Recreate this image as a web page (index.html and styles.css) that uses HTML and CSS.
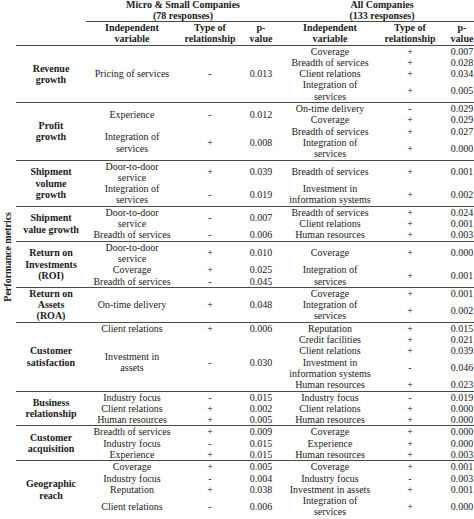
FILE: index.html
```html
<!DOCTYPE html>
<html lang="en">
<head>
<meta charset="utf-8">
<title>Performance metrics</title>
<link rel="stylesheet" href="styles.css">
</head>
<body>
<div class="viewport">
<div class="table">
  <!-- group header -->
  <div class="hd-blank"></div>
  <div class="grp grp-left">Micro &amp; Small Companies<br>(78 responses)</div>
  <div class="grp grp-right">All Companies<br>(133 responses)</div>

  <!-- sub header -->
  <div class="sub sub-blank"></div>
  <div class="sub">Independent<br>variable</div>
  <div class="sub">Type of<br>relationship</div>
  <div class="sub">p-<br>value</div>
  <div class="sub">Independent<br>variable</div>
  <div class="sub">Type of<br>relationship</div>
  <div class="sub">p-<br>value</div>

  <div class="side"><span>Performance metrics</span></div>

  <!-- Revenue growth -->
  <div class="metric">Revenue<br>growth</div>
  <div class="panel left">
    <div class="item"><span>Pricing of services</span><span>-</span><span>0.013</span></div>
  </div>
  <div class="panel right">
    <div class="item"><span>Coverage</span><span>+</span><span>0.007</span></div>
    <div class="item"><span>Breadth of services</span><span>+</span><span>0.028</span></div>
    <div class="item"><span>Client relations</span><span>+</span><span>0.034</span></div>
    <div class="item"><span>Integration of<br>services</span><span>+</span><span>0.005</span></div>
  </div>

  <!-- Profit growth -->
  <div class="metric">Profit<br>growth</div>
  <div class="panel left around">
    <div class="item"><span>Experience</span><span>-</span><span>0.012</span></div>
    <div class="item"><span>Integration of<br>services</span><span>+</span><span>0.008</span></div>
  </div>
  <div class="panel right">
    <div class="item"><span>On-time delivery</span><span>-</span><span>0.029</span></div>
    <div class="item"><span>Coverage</span><span>+</span><span>0.029</span></div>
    <div class="item"><span>Breadth of services</span><span>+</span><span>0.027</span></div>
    <div class="item"><span>Integration of<br>services</span><span>+</span><span>0.000</span></div>
  </div>

  <!-- Shipment volume growth -->
  <div class="metric">Shipment<br>volume<br>growth</div>
  <div class="panel left">
    <div class="item"><span>Door-to-door<br>service</span><span>+</span><span>0.039</span></div>
    <div class="item"><span>Integration of<br>services</span><span>-</span><span>0.019</span></div>
  </div>
  <div class="panel right">
    <div class="item h2"><span>Breadth of services</span><span>+</span><span>0.001</span></div>
    <div class="item h2"><span>Investment in<br>information systems</span><span>+</span><span>0.002</span></div>
  </div>

  <!-- Shipment value growth -->
  <div class="metric">Shipment<br>value growth</div>
  <div class="panel left">
    <div class="item"><span>Door-to-door<br>service</span><span>-</span><span>0.007</span></div>
    <div class="item"><span>Breadth of services</span><span>-</span><span>0.006</span></div>
  </div>
  <div class="panel right">
    <div class="item"><span>Breadth of services</span><span>+</span><span>0.024</span></div>
    <div class="item"><span>Client relations</span><span>+</span><span>0.001</span></div>
    <div class="item"><span>Human resources</span><span>+</span><span>0.003</span></div>
  </div>

  <!-- ROI -->
  <div class="metric">Return on<br>Investments<br>(ROI)</div>
  <div class="panel left">
    <div class="item"><span>Door-to-door<br>service</span><span>+</span><span>0.010</span></div>
    <div class="item"><span>Coverage</span><span>+</span><span>0.025</span></div>
    <div class="item"><span>Breadth of services</span><span>-</span><span>0.045</span></div>
  </div>
  <div class="panel right">
    <div class="item h2"><span>Coverage</span><span>+</span><span>0.000</span></div>
    <div class="item h2"><span>Integration of<br>services</span><span>+</span><span>0.001</span></div>
  </div>

  <!-- ROA -->
  <div class="metric">Return on<br>Assets<br>(ROA)</div>
  <div class="panel left">
    <div class="item"><span>On-time delivery</span><span>+</span><span>0.048</span></div>
  </div>
  <div class="panel right">
    <div class="item"><span>Coverage</span><span>+</span><span>0.001</span></div>
    <div class="item"><span>Integration of<br>services</span><span>+</span><span>0.002</span></div>
  </div>

  <!-- Customer satisfaction -->
  <div class="metric">Customer<br>satisfaction</div>
  <div class="panel left top">
    <div class="item"><span>Client relations</span><span>+</span><span>0.006</span></div>
    <div class="item grow"><span>Investment in<br>assets</span><span>-</span><span>0.030</span></div>
  </div>
  <div class="panel right">
    <div class="item"><span>Reputation</span><span>+</span><span>0.015</span></div>
    <div class="item"><span>Credit facilities</span><span>+</span><span>0.021</span></div>
    <div class="item"><span>Client relations</span><span>+</span><span>0.039</span></div>
    <div class="item"><span>Investment in<br>information systems</span><span>-</span><span>0.046</span></div>
    <div class="item"><span>Human resources</span><span>+</span><span>0.023</span></div>
  </div>

  <!-- Business relationship -->
  <div class="metric">Business<br>relationship</div>
  <div class="panel left">
    <div class="item"><span>Industry focus</span><span>-</span><span>0.015</span></div>
    <div class="item"><span>Client relations</span><span>+</span><span>0.002</span></div>
    <div class="item"><span>Human resources</span><span>+</span><span>0.005</span></div>
  </div>
  <div class="panel right">
    <div class="item"><span>Industry focus</span><span>-</span><span>0.019</span></div>
    <div class="item"><span>Client relations</span><span>+</span><span>0.000</span></div>
    <div class="item"><span>Human resources</span><span>+</span><span>0.000</span></div>
  </div>

  <!-- Customer acquisition -->
  <div class="metric">Customer<br>acquisition</div>
  <div class="panel left">
    <div class="item"><span>Breadth of services</span><span>+</span><span>0.009</span></div>
    <div class="item"><span>Industry focus</span><span>-</span><span>0.015</span></div>
    <div class="item"><span>Experience</span><span>+</span><span>0.015</span></div>
  </div>
  <div class="panel right">
    <div class="item"><span>Coverage</span><span>+</span><span>0.000</span></div>
    <div class="item"><span>Experience</span><span>+</span><span>0.000</span></div>
    <div class="item"><span>Human resources</span><span>+</span><span>0.003</span></div>
  </div>

  <!-- Geographic reach -->
  <div class="metric last">Geographic<br>reach</div>
  <div class="panel left top last">
    <div class="item"><span>Coverage</span><span>+</span><span>0.005</span></div>
    <div class="item"><span>Industry focus</span><span>-</span><span>0.004</span></div>
    <div class="item"><span>Reputation</span><span>+</span><span>0.038</span></div>
    <div class="item h2"><span>Client relations</span><span>-</span><span>0.006</span></div>
  </div>
  <div class="panel right top last">
    <div class="item"><span>Coverage</span><span>+</span><span>0.001</span></div>
    <div class="item"><span>Industry focus</span><span>-</span><span>0.003</span></div>
    <div class="item"><span>Investment in assets</span><span>+</span><span>0.001</span></div>
    <div class="item"><span>Integration of<br>services</span><span>+</span><span>0.000</span></div>
  </div>
</div>
</div>
</body>
</html>
```

FILE: styles.css
```css
html, body {
  margin: 0;
  padding: 0;
  background: #ffffff;
}

.viewport {
  width: 474px;
  height: 519px;
  overflow: hidden;
}

.table {
  display: grid;
  grid-template-columns: 16px 70px 92px 64px 38px 100px 60px 44px;
  width: 484px;
  font-family: "Liberation Serif", "Times New Roman", serif;
  font-size: 10px;
  line-height: 11.3px;
  color: #1a1a1a;
}

.hd-blank {
  grid-column: 1 / span 2;
}

.grp {
  font-weight: bold;
  text-align: center;
  line-height: 10.5px;
  padding-top: 0;
  border-bottom: 1px solid #4a4a4a;
}

.grp-left {
  grid-column: 3 / span 3;
}

.grp-right {
  grid-column: 6 / span 3;
}

.sub {
  font-weight: bold;
  text-align: center;
  border-bottom: 1px solid #4a4a4a;
}

.sub-blank {
  grid-column: 2;
}

.side {
  grid-column: 1;
  grid-row: 3 / span 10;
  display: flex;
  justify-content: center;
  align-items: flex-start;
  padding-top: 166px;
}

.side span {
  writing-mode: vertical-rl;
  transform: rotate(180deg);
  font-weight: bold;
  white-space: nowrap;
}

.metric {
  grid-column: 2;
  display: flex;
  align-items: center;
  justify-content: center;
  text-align: center;
  font-weight: bold;
  border-bottom: 1px solid #4a4a4a;
}

.panel {
  display: flex;
  flex-direction: column;
  justify-content: center;
  border-bottom: 1px solid #4a4a4a;
}

.panel.left {
  grid-column: 3 / span 3;
}

.panel.right {
  grid-column: 6 / span 3;
}

.panel.around {
  justify-content: space-around;
}

.panel.top {
  justify-content: flex-start;
}

.last {
  border-bottom: none;
}

.item {
  display: grid;
  align-items: center;
  text-align: center;
}

.left .item {
  grid-template-columns: 92px 64px 38px;
}

.right .item {
  grid-template-columns: 100px 60px 44px;
}

.item.h2 {
  min-height: 22.6px;
}

.item.grow {
  flex: 1;
}
```
